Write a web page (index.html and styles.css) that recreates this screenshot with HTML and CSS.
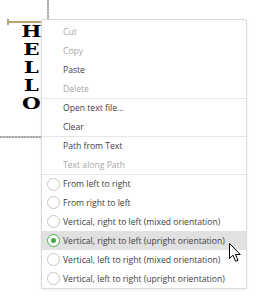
FILE: index.html
```html
<!DOCTYPE html>
<html lang="en">
<head>
    <meta charset="UTF-8">
    <meta name="viewport" content="width=device-width, initial-scale=1.0">
    <title>Text context menu</title>
    <link rel="stylesheet" href="styles.css">
</head>
<body>
    <div class="canvas">
        <!-- guide lines on the canvas -->
        <div class="guide guide-v"></div>
        <div class="guide guide-h"></div>

        <!-- text cursor of the vertical text frame -->
        <svg class="caret" width="40" height="10" viewBox="0 0 40 10">
            <rect x="1" y="3" width="2" height="6" fill="#b9a36c"/>
            <rect x="1" y="5" width="38" height="2" fill="#b9a36c"/>
        </svg>

        <div class="hello">HELLO</div>

        <!-- Context Menu -->
        <div class="menu">
            <div class="menu-group">
                <div class="menu-item disabled">Cut</div>
                <div class="menu-item disabled">Copy</div>
                <div class="menu-item">Paste</div>
                <div class="menu-item disabled">Delete</div>
            </div>
            <div class="menu-group">
                <div class="menu-item">Open text file...</div>
                <div class="menu-item">Clear</div>
            </div>
            <div class="menu-group">
                <div class="menu-item">Path from Text</div>
                <div class="menu-item disabled">Text along Path</div>
            </div>
            <div class="menu-group">
                <div class="menu-item"><span class="radio"></span>From left to right</div>
                <div class="menu-item"><span class="radio"></span>From right to left</div>
                <div class="menu-item"><span class="radio"></span>Vertical, right to left (mixed orientation)</div>
                <div class="menu-item hover"><span class="radio checked"></span>Vertical, right to left (upright orientation)</div>
                <div class="menu-item"><span class="radio"></span>Vertical, left to right (mixed orientation)</div>
                <div class="menu-item"><span class="radio"></span>Vertical, left to right (upright orientation)</div>
            </div>
        </div>

        <!-- mouse pointer -->
        <svg class="pointer" width="13" height="20" viewBox="0 0 13 20">
            <path d="M0.5 0.5 L0.5 15.5 L4 12.2 L6.6 18.3 L9 17.3 L6.5 11.5 L11.3 11.5 Z" fill="#fff" stroke="#000" stroke-width="1" stroke-linejoin="round"/>
        </svg>
    </div>
</body>
</html>
```

FILE: styles.css
```css
* {
    margin: 0;
    padding: 0;
    box-sizing: border-box;
}

body {
    background-color: #fff;
    font-family: "Open Sans", "Noto Sans", sans-serif;
}

.canvas {
    position: relative;
    width: 273px;
    height: 300px;
    overflow: hidden;
}

.guide {
    position: absolute;
}

.guide-v {
    left: 47px;
    top: 0;
    width: 2px;
    height: 20px;
    background: repeating-linear-gradient(to bottom, #a9a9a9 0 2px, #c9c9c9 2px 3px);
}

.guide-h {
    left: 0;
    top: 136px;
    width: 42px;
    height: 2px;
    background: repeating-linear-gradient(to right, #a9a9a9 0 2px, #c9c9c9 2px 3px);
}

.caret {
    position: absolute;
    left: 6px;
    top: 16px;
}

.hello {
    position: absolute;
    left: 19px;
    top: 22px;
    writing-mode: vertical-rl;
    text-orientation: upright;
    font-family: "DejaVu Serif", serif;
    font-weight: bold;
    font-size: 16.5px;
    letter-spacing: -0.9px;
    color: #000;
    transform: scaleX(1.3);
    transform-origin: left top;
}

.menu {
    position: absolute;
    left: 41px;
    top: 19px;
    width: 206px;
    padding: 2px 0 0;
    background-color: #fff;
    border: 1px solid #dadada;
    border-radius: 2px;
    box-shadow: 0 1px 3px rgba(0,0,0,0.08);
}

.menu-group + .menu-group {
    border-top: 1px solid #e6e6e6;
}

.menu-group + .menu-group .menu-item:first-child {
    height: 18px;
}

.menu-item {
    display: flex;
    align-items: center;
    height: 19px;
    padding-left: 21px;
    font-size: 8.6px;
    color: #404040;
    white-space: nowrap;
    position: relative;
}

.menu-item.disabled {
    color: #a6a6a6;
}

.menu-item.hover {
    background-color: #e1e1e1;
}

.radio {
    position: absolute;
    left: 5px;
    top: 3px;
    width: 13px;
    height: 13px;
    border: 1px solid #c6c6c6;
    border-radius: 50%;
    background-color: #fff;
}

.radio.checked {
    border-color: #4cb050;
}

.radio.checked::after {
    content: "";
    position: absolute;
    left: 3px;
    top: 3px;
    width: 5px;
    height: 5px;
    border-radius: 50%;
    background-color: #3fae48;
}

.pointer {
    position: absolute;
    left: 229px;
    top: 243px;
}
```
